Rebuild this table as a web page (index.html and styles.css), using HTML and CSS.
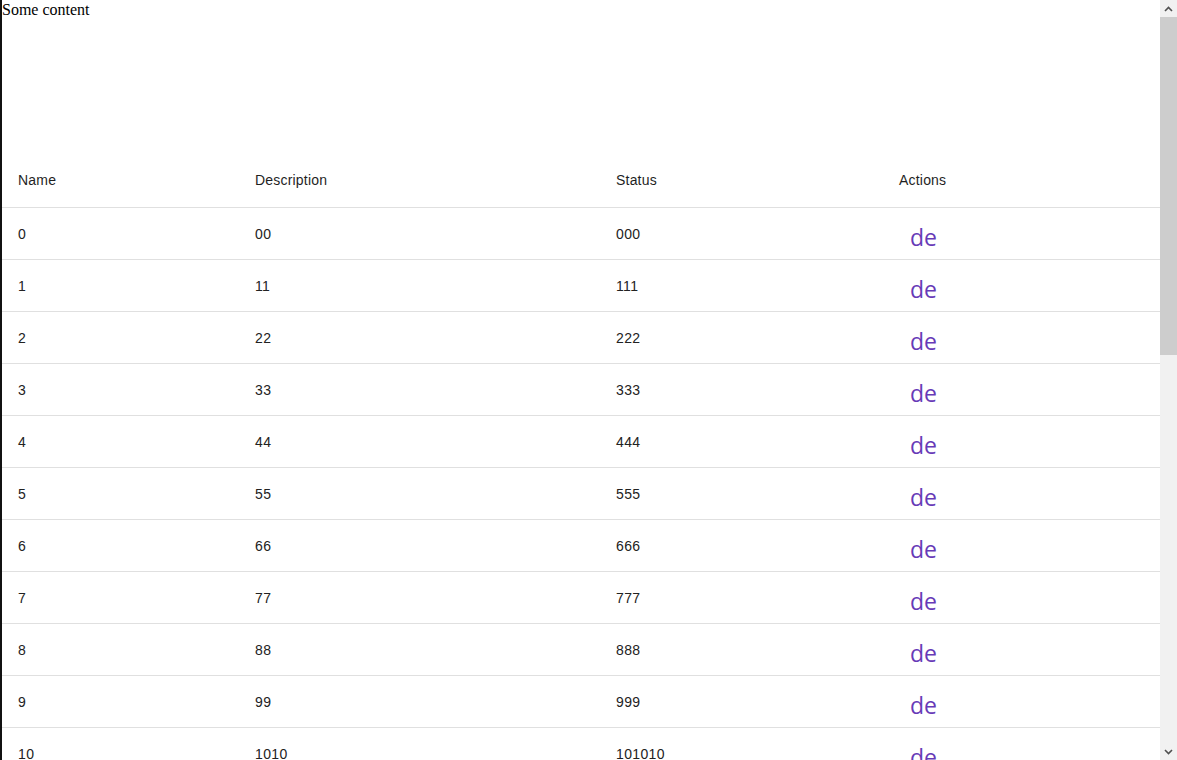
FILE: index.html
```html
<!DOCTYPE html>
<html>
<head>
<meta charset="utf-8">
<link rel="stylesheet" href="styles.css">
</head>
<body>
<div class="page">
  <div class="top">Some content</div>
  <table class="grid">
    <colgroup>
      <col class="c-name"><col class="c-desc"><col class="c-status"><col class="c-actions">
    </colgroup>
    <thead>
      <tr><th>Name</th><th>Description</th><th>Status</th><th>Actions</th></tr>
    </thead>
    <tbody id="rows"></tbody>
  </table>
</div>
<div class="vscroll" aria-hidden="true">
  <div class="arrow up"><svg width="9" height="6" viewBox="0 0 9 6"><path d="M1 5 L4.5 1.5 L8 5" fill="none" stroke="#505050" stroke-width="1.6"/></svg></div>
  <div class="track"><div class="thumb"></div></div>
  <div class="arrow down"><svg width="9" height="6" viewBox="0 0 9 6"><path d="M1 1 L4.5 4.5 L8 1" fill="none" stroke="#505050" stroke-width="1.6"/></svg></div>
</div>
<script src="app.js"></script>
</body>
</html>
```
FILE: app.js
```js
var tb = document.getElementById('rows');
var html = '';
for (var i = 0; i < 27; i++) {
  var s = String(i);
  html += '<tr><td>' + s + '</td><td>' + s + s + '</td><td>' + s + s + s +
    '</td><td><span class="icon">de</span></td></tr>';
}
tb.innerHTML = html;
```
FILE: styles.css
```css
html, body {
  margin: 0;
  padding: 0;
  background: #fff;
}
.page {
  border-left: 2px solid #111;
}
.top {
  font-family: "Liberation Serif", "Times New Roman", serif;
  font-size: 16px;
  line-height: 20px;
  color: #000;
  height: 152px;
}
.grid {
  width: 1158px;
  border-collapse: collapse;
  table-layout: fixed;
  font-family: "Liberation Sans", Arial, sans-serif;
  font-size: 14px;
  color: #222;
}
.c-name { width: 237px; }
.c-desc { width: 361px; }
.c-status { width: 283px; }
.c-actions { width: 277px; }
.grid th {
  text-align: left;
  font-weight: normal;
  height: 55px;
  padding: 0 0 0 16px;
  border-bottom: 1px solid #e0e0e0;
  vertical-align: middle;
  color: #1f1f1f;
  letter-spacing: 0.2px;
}
.grid td {
  height: 51px;
  padding: 0 0 0 16px;
  border-bottom: 1px solid #e0e0e0;
  vertical-align: middle;
  letter-spacing: 0.35px;
}
.icon {
  display: inline-block;
  height: 28px;
  white-space: nowrap;
  margin-left: 11px;
  margin-top: 6px;
  font-family: "Open Sans", "Noto Sans", sans-serif;
  font-size: 23px;
  line-height: 28px;
  letter-spacing: 0;
  color: #673ab7;
  vertical-align: middle;
}
.vscroll {
  position: fixed;
  top: 0;
  right: 0;
  bottom: 0;
  width: 17px;
  background: #f1f1f1;
  display: flex;
  flex-direction: column;
}
.arrow {
  height: 17px;
  display: flex;
  align-items: center;
  justify-content: center;
  flex: none;
}
.track {
  flex: 1;
}
.thumb {
  height: 338px;
  background: #cdcdcd;
}
```
